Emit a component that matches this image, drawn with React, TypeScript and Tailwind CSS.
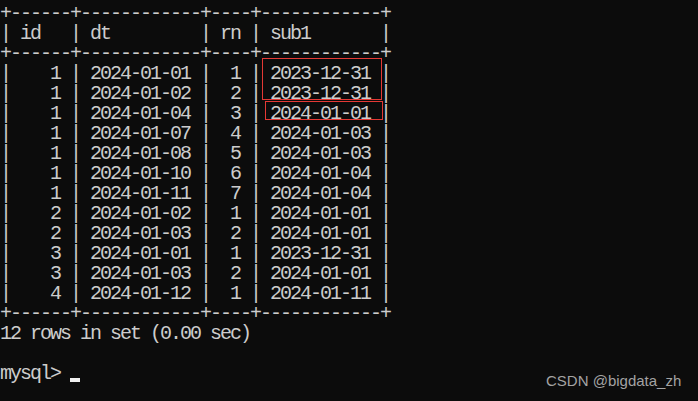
import React from "react";

const rows: [number, string, number, string][] = [
  [1, "2024-01-01", 1, "2023-12-31"],
  [1, "2024-01-02", 2, "2023-12-31"],
  [1, "2024-01-04", 3, "2024-01-01"],
  [1, "2024-01-07", 4, "2024-01-03"],
  [1, "2024-01-08", 5, "2024-01-03"],
  [1, "2024-01-10", 6, "2024-01-04"],
  [1, "2024-01-11", 7, "2024-01-04"],
  [2, "2024-01-02", 1, "2024-01-01"],
  [2, "2024-01-03", 2, "2024-01-01"],
  [3, "2024-01-01", 1, "2023-12-31"],
  [3, "2024-01-03", 2, "2024-01-01"],
  [4, "2024-01-12", 1, "2024-01-11"],
];

const border = "+------+------------+----+------------+";
const header = "| id   | dt         | rn | sub1       |";

export default function App() {
  const lines: string[] = [border, header, border];
  rows.forEach(([id, dt, rn, sub]) => {
    lines.push(`| ${String(id).padStart(4, " ")} | ${dt} | ${String(rn).padStart(2, " ")} | ${sub} |`);
  });
  lines.push(border);
  lines.push("12 rows in set (0.00 sec)");
  lines.push("");

  return (
    <div className="relative w-[698px] h-[401px] overflow-hidden bg-[#0c0c0c]">
      <pre
        className="pt-[4px] m-0 whitespace-pre text-[#cccccc] text-[20px] leading-[20px] tracking-[-2px]"
        style={{ fontFamily: '"Liberation Mono", monospace' }}
      >
        {lines.map((l, i) => (
          <div key={i} className="h-[20px]">
            {l}
          </div>
        ))}
        <div className="h-[20px]">
          {"mysql> "}
          <span className="inline-block w-[10px] h-[4px] bg-[#f0f0f0] translate-y-[3px]" />
        </div>
      </pre>
      <div className="absolute left-[262px] top-[58px] w-[120px] h-[42px] border border-[#e53935]" />
      <div className="absolute left-[265px] top-[101px] w-[118px] h-[19px] border border-[#e53935]" />
      <div
        className="absolute left-[546px] top-[371px] text-[15px] leading-[20px] text-[#a3a3a3]"
        style={{ fontFamily: '"Liberation Sans", Arial, sans-serif' }}
      >
        CSDN @bigdata_zh
      </div>
    </div>
  );
}
